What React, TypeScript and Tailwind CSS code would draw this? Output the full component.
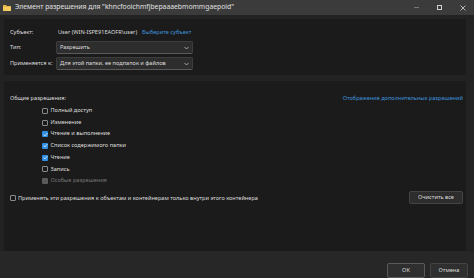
import React from "react";

const font = { fontFamily: '"Noto Sans", "Open Sans", sans-serif' };

function Check({ state }: { state: "off" | "on" | "disabled" }) {
  if (state === "on") {
    return (
      <div className="w-[6px] h-[6px] rounded-[1px] bg-[#2f8ee0] flex items-center justify-center shrink-0">
        <svg width="5" height="5" viewBox="0 0 10 10">
          <path d="M1.5 5.2 L4 7.6 L8.6 2.4" stroke="#fff" strokeWidth="1.6" fill="none" />
        </svg>
      </div>
    );
  }
  if (state === "disabled") {
    return <div className="w-[6px] h-[6px] rounded-[1px] bg-[#5a5a5a] shrink-0" />;
  }
  return <div className="w-[6px] h-[6px] rounded-[1px] border border-[#8a8a8a] bg-[#1a1a1a] shrink-0" />;
}

function Dropdown({ text }: { text: string }) {
  return (
    <div className="w-[137px] h-[13px] rounded-[2px] bg-[#2d2d2d] border border-[#3d3d3d] border-b-[#5a5a5a] flex items-center justify-between pl-[3px] pr-[3px]">
      <span className="text-[5.6px] text-[#dedede] leading-none">{text}</span>
      <svg width="5" height="4" viewBox="0 0 10 6">
        <path d="M1 1 L5 5 L9 1" stroke="#cfcfcf" strokeWidth="1.4" fill="none" />
      </svg>
    </div>
  );
}

export default function App() {
  const perms: { label: string; state: "off" | "on" | "disabled" }[] = [
    { label: "Полный доступ", state: "off" },
    { label: "Изменение", state: "off" },
    { label: "Чтение и выполнение", state: "on" },
    { label: "Список содержимого папки", state: "on" },
    { label: "Чтение", state: "on" },
    { label: "Запись", state: "off" },
    { label: "Особые разрешения", state: "disabled" },
  ];
  return (
    <div className="w-[474px] h-[278px] bg-[#222222] overflow-hidden flex flex-col" style={font}>
      {/* Title bar */}
      <div className="h-[15px] bg-[#3b3b3b] flex items-center shrink-0">
        <svg className="ml-[3px]" width="8" height="6" viewBox="0 0 16 12">
          <path d="M0 1 Q0 0 1 0 H6 L7.5 2 H15 Q16 2 16 3 V11 Q16 12 15 12 H1 Q0 12 0 11 Z" fill="#e8b84a" />
          <path d="M0 4 H16 V11 Q16 12 15 12 H1 Q0 12 0 11 Z" fill="#f4cd5e" />
        </svg>
        <span className="ml-[4px] text-[6.8px] leading-none text-[#e0e0e0]">
          Элемент разрешения для "khncfooichmfjbepaaaebmommgaepoid"
        </span>
        <div className="ml-auto flex items-center h-full">
          <div className="w-[23px] h-full flex items-center justify-center">
            <div className="w-[5px] h-[1px] bg-[#777]" />
          </div>
          <div className="w-[23px] h-full flex items-center justify-center">
            <div className="w-[5px] h-[5px] border border-[#cfcfcf]" />
          </div>
          <div className="w-[23px] h-full flex items-center justify-center">
            <svg width="6" height="6" viewBox="0 0 10 10">
              <path d="M1 1 L9 9 M9 1 L1 9" stroke="#dcdcdc" strokeWidth="1.3" />
            </svg>
          </div>
        </div>
      </div>

      {/* Panel 1 */}
      <div className="mt-[4px] ml-[4px] mr-[8px] h-[57px] bg-[#1b1b1b] pl-[6px] pt-[8px] flex flex-col">
        <div className="h-[12px] flex items-center text-[5.6px] leading-none">
          <span className="w-[48px] text-[#dedede]">Субъект:</span>
          <span className="ml-[0px] text-[#dedede]">User (WIN-ISPE91EAOFR\user)</span>
          <span className="ml-[5px] text-[#3f93dc]">Выберите субъект</span>
        </div>
        <div className="mt-[2px] flex items-center">
          <span className="w-[46px] text-[5.6px] leading-none text-[#dedede]">Тип:</span>
          <Dropdown text="Разрешить" />
        </div>
        <div className="mt-[3px] flex items-center">
          <span className="w-[46px] text-[5.6px] leading-none text-[#dedede]">Применяется к:</span>
          <Dropdown text="Для этой папки, ее подпапок и файлов" />
        </div>
      </div>

      {/* Panel 2 */}
      <div className="mt-[6px] ml-[4px] mr-[8px] h-[173px] bg-[#1b1b1b] pl-[6px] pr-[3px] pt-[12px] flex flex-col">
        <div className="h-[12px] flex items-center justify-between text-[5.6px] leading-none">
          <span className="text-[#dedede]">Общие разрешения:</span>
          <span className="text-[#3f93dc]">Отображение дополнительных разрешений</span>
        </div>
        <div className="flex flex-col pl-[32px]">
          {perms.map((p) => (
            <div key={p.label} className="h-[11.7px] flex items-center gap-[2.5px]">
              <Check state={p.state} />
              <span
                className={
                  "text-[5.6px] leading-none " +
                  (p.state === "disabled" ? "text-[#777777]" : "text-[#dedede]")
                }
              >
                {p.label}
              </span>
            </div>
          ))}
        </div>
        <div className="mt-[4px] h-[13px] flex items-center justify-between">
          <div className="flex items-center gap-[2px] pt-[2px]">
            <Check state="off" />
            <span className="text-[5.6px] leading-none text-[#dedede]">
              Применять эти разрешения к объектам и контейнерам только внутри этого контейнера
            </span>
          </div>
          <div className="w-[54px] h-[13px] rounded-[2px] bg-[#2d2d2d] border border-[#444] flex items-center justify-center text-[5.6px] leading-none text-[#dedede]">
            Очистить все
          </div>
        </div>
      </div>

      {/* Bottom bar */}
      <div className="flex-1 bg-[#272727] flex justify-end items-start pt-[12px] pr-[6px] gap-[5px]">
        <div className="w-[38px] h-[15px] rounded-[2px] bg-[#2f2f2f] border border-[#5a5a5a] flex items-center justify-center text-[5.6px] leading-none text-[#dedede]">
          OK
        </div>
        <div className="w-[38px] h-[15px] rounded-[2px] bg-[#2f2f2f] border border-[#444] flex items-center justify-center text-[5.6px] leading-none text-[#dedede]">
          Отмена
        </div>
      </div>
    </div>
  );
}
